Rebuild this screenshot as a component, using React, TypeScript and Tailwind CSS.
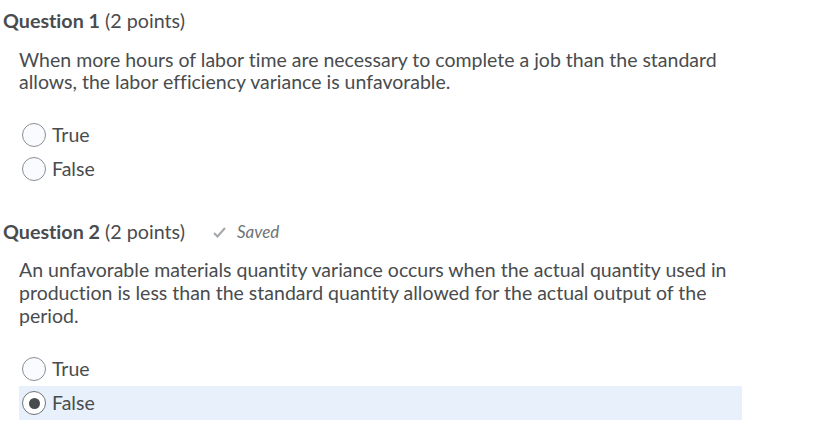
import { useState } from 'react';

type Option = { label: string };

function Radio({ checked }: { checked: boolean }) {
  return (
    <span
      className={`w-[24px] h-[24px] rounded-full border flex items-center justify-center shrink-0 ${
        checked ? 'border-[#6e7376] bg-white' : 'border-[#8b8f92] bg-[#f9fbff]'
      }`}
    >
      {checked && <span className="w-[11px] h-[11px] rounded-full bg-[#494c4e]" />}
    </span>
  );
}

function OptionRow({ label, checked, onSelect }: Option & { checked: boolean; onSelect: () => void }) {
  return (
    <div
      onClick={onSelect}
      className={`flex items-center h-[34px] pl-[3px] gap-[6px] cursor-pointer ${checked ? 'bg-[#e8f1fb]' : ''}`}
    >
      <Radio checked={checked} />
      <span className="text-[19.5px] leading-[22px]">{label}</span>
    </div>
  );
}

function Question({
  num,
  text,
  saved,
  initial,
  bodyLeading,
  className,
}: {
  num: number;
  text: string;
  saved?: boolean;
  initial: number | null;
  bodyLeading: string;
  className: string;
}) {
  const [sel, setSel] = useState<number | null>(initial);
  const options = ['True', 'False'];

  return (
    <div className={className}>
      <div className="flex items-center h-[30px] pl-[3px]">
        <span className="text-[19.7px] font-bold">Question {num}</span>
        <span className="text-[19.7px] ml-[5px]">(2 points)</span>
        {saved && (
          <span className="flex items-center ml-[28px] text-[#6e7376]">
            <svg width="13" height="11" viewBox="0 0 13 11" className="mr-[11px]">
              <path d="M1 6 L4.5 9.5 L12 1" fill="none" stroke="#a3a7aa" strokeWidth="2" />
            </svg>
            <span className="italic text-[17px]">Saved</span>
          </span>
        )}
      </div>
      <p className={`ml-[19px] w-[723px] text-[19.5px] ${bodyLeading}`}>{text}</p>
      <div className="pl-[19px] w-[742px] mt-[25px]">
        {options.map((o, i) => (
          <OptionRow key={o} label={o} checked={sel === i} onSelect={() => setSel(i)} />
        ))}
      </div>
    </div>
  );
}

export default function App() {
  return (
    <div className="w-[837px] h-[446px] bg-white text-[#494c4e] font-['Lato',sans-serif] [font-variant-ligatures:none] overflow-hidden">
      <Question
        className="pt-[6px]"
        num={1}
        initial={null}
        bodyLeading="leading-[22px] mt-[13px]"
        text="When more hours of labor time are necessary to complete a job than the standard allows, the labor efficiency variance is unfavorable."
      />
      <Question
        className="pt-[31px]"
        num={2}
        saved
        initial={1}
        bodyLeading="leading-[23px] mt-[11px]"
        text="An unfavorable materials quantity variance occurs when the actual quantity used in production is less than the standard quantity allowed for the actual output of the period."
      />
    </div>
  );
}
